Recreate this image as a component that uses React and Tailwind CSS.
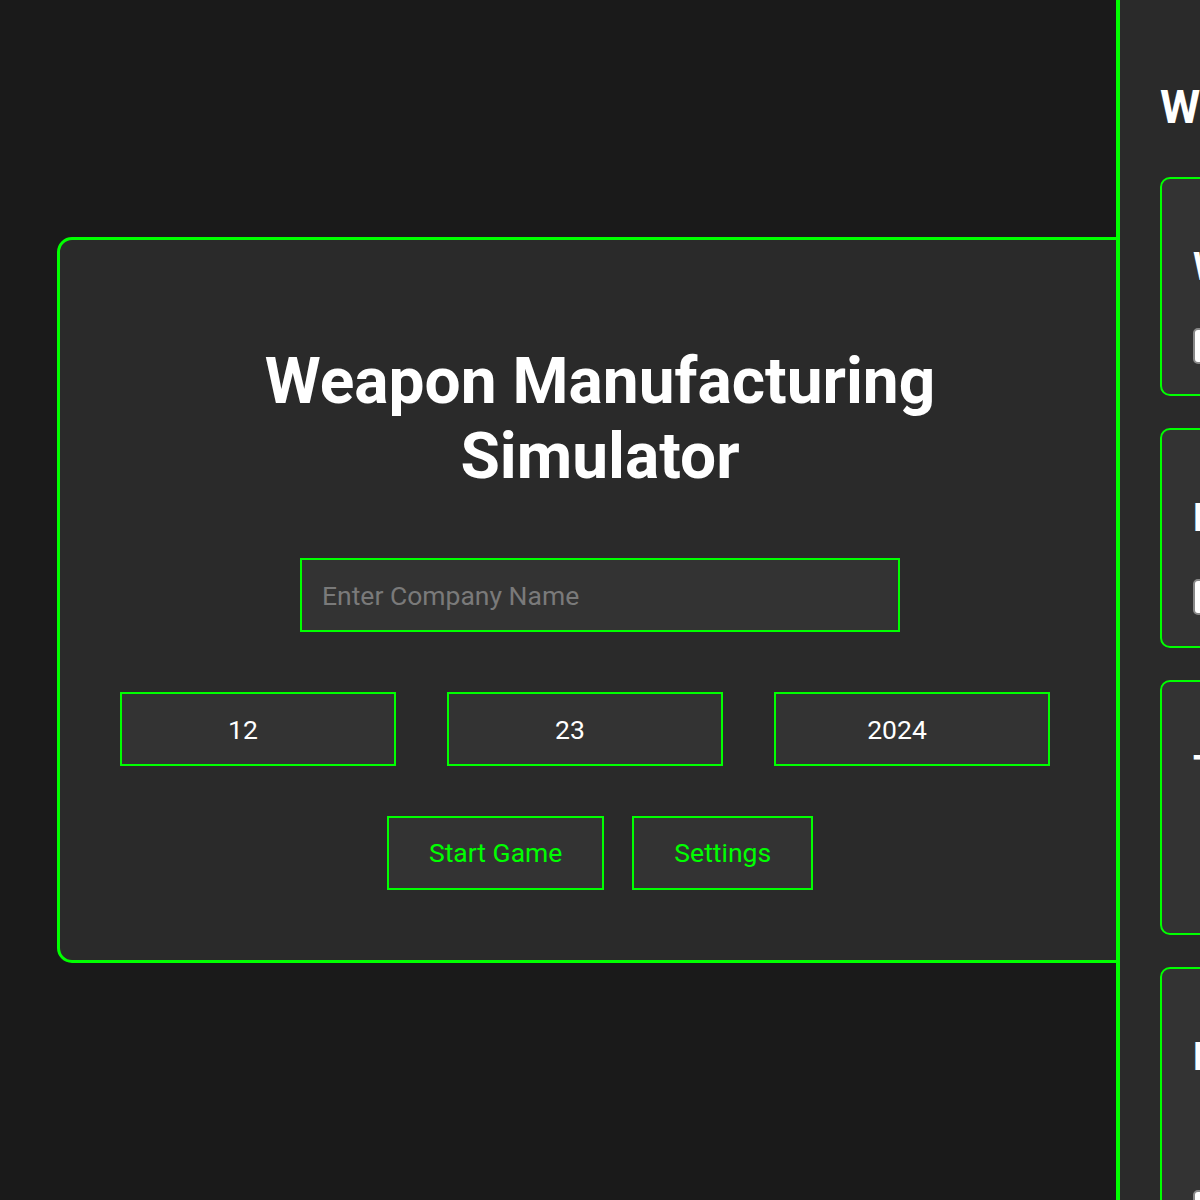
import React from "react";

const SideCard = ({ title, children, className = "" }) => (
  <div className={`w-[320px] rounded-[10px] border-2 border-[#00ff00] bg-[#333333] px-[31px] pt-[66px] pb-[30px] ${className}`}>
    <h3 className="whitespace-nowrap text-[38px] font-bold leading-[45px] text-white">{title}</h3>
    {children}
  </div>
);

const App = () => {
  return (
    <div className="relative flex h-[1200px] w-full items-center justify-center overflow-hidden bg-[#1a1a1a] font-['Roboto',sans-serif]">
      {/* Start screen */}
      <div className="w-[1086px] rounded-[15px] border-[3px] border-[#00ff00] bg-[#2a2a2a] pt-[104px] pb-[70px]">
        <h1 className="mx-auto max-w-[720px] text-center text-[64px] font-bold leading-[75px] text-white">
          Weapon Manufacturing Simulator
        </h1>

        <div className="mt-[64px] flex justify-center">
          <input
            type="text"
            placeholder="Enter Company Name"
            className="h-[74px] w-[600px] border-2 border-[#00ff00] bg-[#333333] px-[20px] text-[26.5px] text-white outline-none placeholder:text-[#7a7a7a]"
          />
        </div>

        <div className="mt-[60px] flex gap-[51px] pl-[60px]">
          {["12", "23", "2024"].map((v) => (
            <input
              key={v}
              type="text"
              defaultValue={v}
              className="h-[74px] w-[276px] border-2 border-[#00ff00] bg-[#333333] pl-[20px] pr-[50px] text-center text-[26.5px] text-white outline-none"
            />
          ))}
        </div>

        <div className="mt-[50px] flex justify-center gap-[28px]">
          <button className="h-[74px] border-2 border-[#00ff00] bg-[#333333] px-[40px] text-[26.5px] text-[#00ff00]">
            Start Game
          </button>
          <button className="h-[74px] border-2 border-[#00ff00] bg-[#333333] px-[40px] text-[26.5px] text-[#00ff00]">
            Settings
          </button>
        </div>
      </div>

      {/* Side panel */}
      <div className="absolute top-0 left-[1116px] h-full w-[400px] border-l-4 border-[#00ff00] bg-[#2a2a2a] pt-[80px] pl-[40px]">
        <h2 className="mb-[43px] whitespace-nowrap text-[46px] font-bold leading-[54px] text-white">Workshop</h2>
        <div className="flex flex-col gap-[32px]">
          <SideCard title="Weapon Design">
            <input type="text" className="mt-[38px] h-[36px] w-[250px] rounded-[5px] border-2 border-[#888888] bg-white" />
          </SideCard>
          <SideCard title="Materials" className="pb-[31px]">
            <input type="text" className="mt-[38px] h-[36px] w-[250px] rounded-[5px] border-2 border-[#888888] bg-white" />
          </SideCard>
          <SideCard title="Testing">
            <div className="h-[110px]"></div>
          </SideCard>
          <SideCard title="Finances">
            <div className="h-[110px]"></div>
            <input type="text" className="h-[36px] w-[250px] rounded-[5px] border-2 border-[#888888] bg-white" />
          </SideCard>
        </div>
      </div>
    </div>
  );
};

export default App;
